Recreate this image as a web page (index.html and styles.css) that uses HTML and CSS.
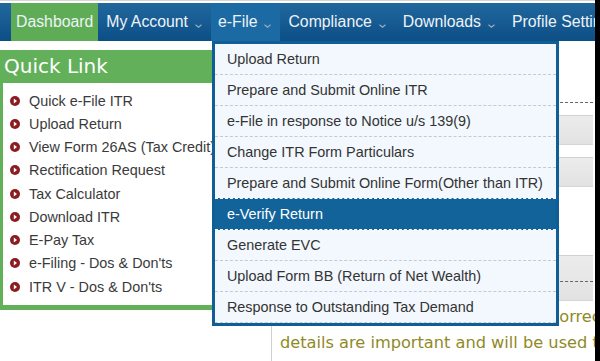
FILE: index.html
```html
<!DOCTYPE html>
<html lang="en">
<head>
<meta charset="utf-8">
<title>e-Filing Dashboard</title>
<link rel="stylesheet" href="styles.css">
</head>
<body>
<div class="screen">
  <div class="viewport">
    <nav class="topnav">
      <div class="nav-item nav-green">Dashboard</div>
      <div class="nav-item">My Account<svg class="caret" viewBox="0 0 7 4"><polyline points="0.5,0.8 3.5,3.2 6.5,0.8"/></svg></div>
      <div class="nav-item nav-open">e-File<svg class="caret" viewBox="0 0 7 4"><polyline points="0.5,0.8 3.5,3.2 6.5,0.8"/></svg>
        <ul class="dropdown">
          <li class="dd-item">Upload Return</li>
          <li class="dd-item">Prepare and Submit Online ITR</li>
          <li class="dd-item">e-File in response to Notice u/s 139(9)</li>
          <li class="dd-item">Change ITR Form Particulars</li>
          <li class="dd-item">Prepare and Submit Online Form(Other than ITR)</li>
          <li class="dd-item dd-active">e-Verify Return</li>
          <li class="dd-item">Generate EVC</li>
          <li class="dd-item">Upload Form BB (Return of Net Wealth)</li>
          <li class="dd-item">Response to Outstanding Tax Demand</li>
        </ul>
      </div>
      <div class="nav-item">Compliance<svg class="caret" viewBox="0 0 7 4"><polyline points="0.5,0.8 3.5,3.2 6.5,0.8"/></svg></div>
      <div class="nav-item">Downloads<svg class="caret" viewBox="0 0 7 4"><polyline points="0.5,0.8 3.5,3.2 6.5,0.8"/></svg></div>
      <div class="nav-item">Profile Settings<svg class="caret" viewBox="0 0 7 4"><polyline points="0.5,0.8 3.5,3.2 6.5,0.8"/></svg></div>
    </nav>
    <div class="main">
      <aside class="quick">
        <h2 class="quick-title">Quick Link</h2>
        <ul class="quick-list">
          <li><svg class="bullet" viewBox="0 0 10 10"><circle cx="5" cy="5" r="5"/><path d="M3.8 2.6 L7 5 L3.8 7.4 Z"/></svg>Quick e-File ITR</li>
          <li><svg class="bullet" viewBox="0 0 10 10"><circle cx="5" cy="5" r="5"/><path d="M3.8 2.6 L7 5 L3.8 7.4 Z"/></svg>Upload Return</li>
          <li><svg class="bullet" viewBox="0 0 10 10"><circle cx="5" cy="5" r="5"/><path d="M3.8 2.6 L7 5 L3.8 7.4 Z"/></svg>View Form 26AS (Tax Credit)</li>
          <li><svg class="bullet" viewBox="0 0 10 10"><circle cx="5" cy="5" r="5"/><path d="M3.8 2.6 L7 5 L3.8 7.4 Z"/></svg>Rectification Request</li>
          <li><svg class="bullet" viewBox="0 0 10 10"><circle cx="5" cy="5" r="5"/><path d="M3.8 2.6 L7 5 L3.8 7.4 Z"/></svg>Tax Calculator</li>
          <li><svg class="bullet" viewBox="0 0 10 10"><circle cx="5" cy="5" r="5"/><path d="M3.8 2.6 L7 5 L3.8 7.4 Z"/></svg>Download ITR</li>
          <li><svg class="bullet" viewBox="0 0 10 10"><circle cx="5" cy="5" r="5"/><path d="M3.8 2.6 L7 5 L3.8 7.4 Z"/></svg>E-Pay Tax</li>
          <li><svg class="bullet" viewBox="0 0 10 10"><circle cx="5" cy="5" r="5"/><path d="M3.8 2.6 L7 5 L3.8 7.4 Z"/></svg>e-Filing - Dos &amp; Don'ts</li>
          <li><svg class="bullet" viewBox="0 0 10 10"><circle cx="5" cy="5" r="5"/><path d="M3.8 2.6 L7 5 L3.8 7.4 Z"/></svg>ITR V - Dos &amp; Don'ts</li>
        </ul>
      </aside>
      <section class="content">
        <div class="content-head"></div>
        <div class="bar"></div>
        <div class="bar"></div>
        <div class="bar bar-tall"><div class="bar-rule"></div></div>
        <p class="note">Please check that the details are correct as these<br>details are important and will be used to contact you</p>
      </section>
    </div>
  </div>
</div>
</body>
</html>
```

FILE: styles.css
```css
* {
  box-sizing: border-box;
  margin: 0;
  padding: 0;
}

body {
  margin: 0;
  background: #000;
  font-family: "Liberation Sans", Arial, sans-serif;
}

.screen {
  display: flex;
  width: 600px;
  height: 361px;
}

.viewport {
  width: 595px;
  height: 361px;
  flex: none;
  overflow: hidden;
  background: #fff;
  border-top: 1px solid #d6d6d6;
  padding-top: 2px;
}

/* top navigation */
.topnav {
  display: flex;
  height: 38px;
  padding-left: 11px;
  background: linear-gradient(#21689d, #0c4e86);
  white-space: nowrap;
  position: relative;
  z-index: 5;
}

.nav-item {
  display: flex;
  align-items: center;
  flex: none;
  padding: 0 9px 0 8px;
  color: #eef3f8;
  font-size: 15.8px;
  position: relative;
}

.nav-green {
  background: #5eac55;
  padding: 0 5px 0 5px;
}

.nav-open {
  background: #1b6aa3;
  padding-left: 7px;
}

.caret {
  width: 7px;
  height: 4px;
  margin-left: 7px;
  margin-top: 7px;
  fill: none;
  stroke: #98adc2;
  stroke-width: 1.2;
}

/* dropdown */
.dropdown {
  position: absolute;
  top: 38px;
  left: 1px;
  width: 347px;
  list-style: none;
  background: #f2f8fd;
  border: 3px solid #0f5f96;
  z-index: 10;
}

.dd-item {
  height: 31px;
  line-height: 30px;
  padding-left: 12px;
  border-bottom: 1px dashed #c6cacf;
  font-size: 14.4px;
  color: #333;
}

.dd-active {
  height: 32px;
  margin-top: -1px;
  background: #13639b;
  color: #fff;
  border-top: 1px dashed #fff;
  border-bottom-color: #fff;
}

/* main area */
.main {
  display: flex;
  align-items: flex-start;
}

.quick {
  width: 262px;
  flex: none;
  margin-top: 9px;
}

.quick-title {
  height: 33px;
  line-height: 33px;
  padding-left: 4px;
  background: #62b05a;
  color: #fff;
  font-family: "DejaVu Sans", sans-serif;
  font-size: 20px;
  font-weight: normal;
}

.quick-list {
  list-style: none;
  background: #fff;
  border-left: 3px solid #62b05a;
  border-bottom: 5px solid #62b05a;
  padding: 6px 0 7px 7px;
}

.quick-list li {
  display: flex;
  align-items: center;
  gap: 9px;
  height: 23.25px;
  font-size: 14.4px;
  color: #3a3a3a;
  white-space: nowrap;
}

.bullet {
  width: 10px;
  height: 10px;
  flex: none;
  fill: #8b1c1f;
}

.bullet path {
  fill: #fff;
}

/* right content (mostly behind the menu) */
.content {
  width: 322px;
  flex: none;
  margin-left: 9px;
}

.content-head {
  height: 62px;
  border-bottom: 1px dashed #666;
}

.bar {
  height: 30px;
  margin-top: 12px;
  background: linear-gradient(#ececec, #e2e2e2);
  border-top: 1px solid #d2d2d2;
  border-bottom: 1px solid #d6d6d6;
}

.bar-tall {
  height: 46px;
  margin-top: 68px;
  padding-top: 25px;
}

.bar-rule {
  border-top: 1px dashed #666;
}

.note {
  border-left: 1px solid #d0d0d0;
  padding: 3px 0 0 8px;
  height: 70px;
  font-family: "DejaVu Sans", sans-serif;
  font-size: 16.2px;
  line-height: 26px;
  color: #8f8a26;
  white-space: nowrap;
}
```
